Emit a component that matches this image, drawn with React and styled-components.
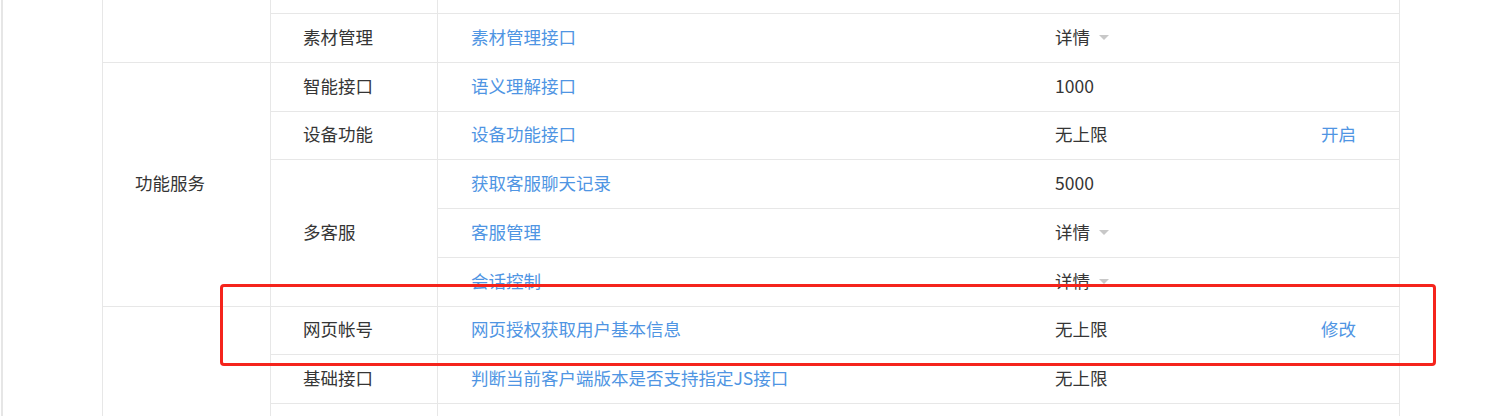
import React from "react";
import styled, { createGlobalStyle } from "styled-components";

const Global = createGlobalStyle`
  html, body { margin: 0; padding: 0; background: #fff; }
  body { font-family: "Noto Sans CJK SC", "Noto Sans", sans-serif; }
`;

const Page = styled.div`
  position: relative;
  height: 416px;
  overflow: hidden;
  margin-left: 1px;
  border-left: 2px solid #e6e6e6;
  padding-left: 99px;
  box-sizing: border-box;
`;

const Table = styled.div`
  display: grid;
  grid-template-columns: 168px 167px 584px 266px 111px;
  grid-auto-rows: 48.75px;
  width: max-content;
  margin-top: -34.75px;
  border-left: 1px solid #e7e7e7;
  border-right: 1px solid #e7e7e7;
  font-size: 17.5px;
  color: #353535;
`;

const Cell = styled.div`
  box-sizing: border-box;
  display: flex;
  align-items: center;
  padding-left: ${(p) => (p.$first ? 32 : 33)}px;
  padding-bottom: 3px;
  border-bottom: 1px solid #e7e7e7;
  border-right: ${(p) => (p.$divider ? "1px solid #e7e7e7" : "none")};
  grid-row: span ${(p) => p.$span || 1};
  grid-column: ${(p) => p.$col};
  white-space: nowrap;
`;

const Link = styled.span`
  color: #4f95e3;
`;

const Detail = styled.span`
  display: inline-flex;
  align-items: center;
`;

const Caret = styled.span`
  width: 0;
  height: 0;
  margin-left: 9px;
  margin-top: 2px;
  border-left: 5px solid transparent;
  border-right: 5px solid transparent;
  border-top: 5px solid #c8c8c8;
`;

const Highlight = styled.div`
  position: absolute;
  left: 217px;
  top: 284px;
  width: 1216px;
  height: 82px;
  box-sizing: border-box;
  border: 3px solid #f5241c;
  border-radius: 4px;
  pointer-events: none;
`;

const groups = [
  {
    label: "",
    subs: [
      { name: "", items: [{ api: "", value: "" }] },
      { name: "素材管理", items: [{ api: "素材管理接口", value: { detail: true } }] },
    ],
  },
  {
    label: "功能服务",
    subs: [
      { name: "智能接口", items: [{ api: "语义理解接口", value: "1000" }] },
      { name: "设备功能", items: [{ api: "设备功能接口", value: "无上限", action: "开启" }] },
      {
        name: "多客服",
        items: [
          { api: "获取客服聊天记录", value: "5000" },
          { api: "客服管理", value: { detail: true } },
          { api: "会话控制", value: { detail: true } },
        ],
      },
    ],
  },
  {
    label: "",
    subs: [
      { name: "网页帐号", items: [{ api: "网页授权获取用户基本信息", value: "无上限", action: "修改" }] },
      { name: "基础接口", items: [{ api: "判断当前客户端版本是否支持指定JS接口", value: "无上限" }] },
      { name: "", items: [{ api: "", value: "" }] },
    ],
  },
];

function Value({ value }) {
  if (value && value.detail) {
    return (
      <Detail>
        详情
        <Caret />
      </Detail>
    );
  }
  return value || null;
}

export default function App() {
  const cells = [];
  groups.forEach((g, gi) => {
    const total = g.subs.reduce((n, s) => n + s.items.length, 0);
    cells.push(
      <Cell key={`g${gi}`} $col="1" $span={total} $divider $first>
        {g.label}
      </Cell>
    );
    g.subs.forEach((s, si) => {
      s.items.forEach((it, ii) => {
        if (ii === 0) {
          cells.push(
            <Cell key={`s${gi}-${si}`} $col="2" $span={s.items.length} $divider $first>
              {s.name}
            </Cell>
          );
        }
        const k = `${gi}-${si}-${ii}`;
        cells.push(
          <Cell key={`a${k}`} $col="3">
            {it.api ? <Link>{it.api}</Link> : null}
          </Cell>,
          <Cell key={`v${k}`} $col="4">
            <Value value={it.value} />
          </Cell>,
          <Cell key={`c${k}`} $col="5">
            {it.action ? <Link>{it.action}</Link> : null}
          </Cell>
        );
      });
    });
  });

  return (
    <>
      <Global />
      <Page>
        <Table>{cells}</Table>
        <Highlight />
      </Page>
    </>
  );
}
